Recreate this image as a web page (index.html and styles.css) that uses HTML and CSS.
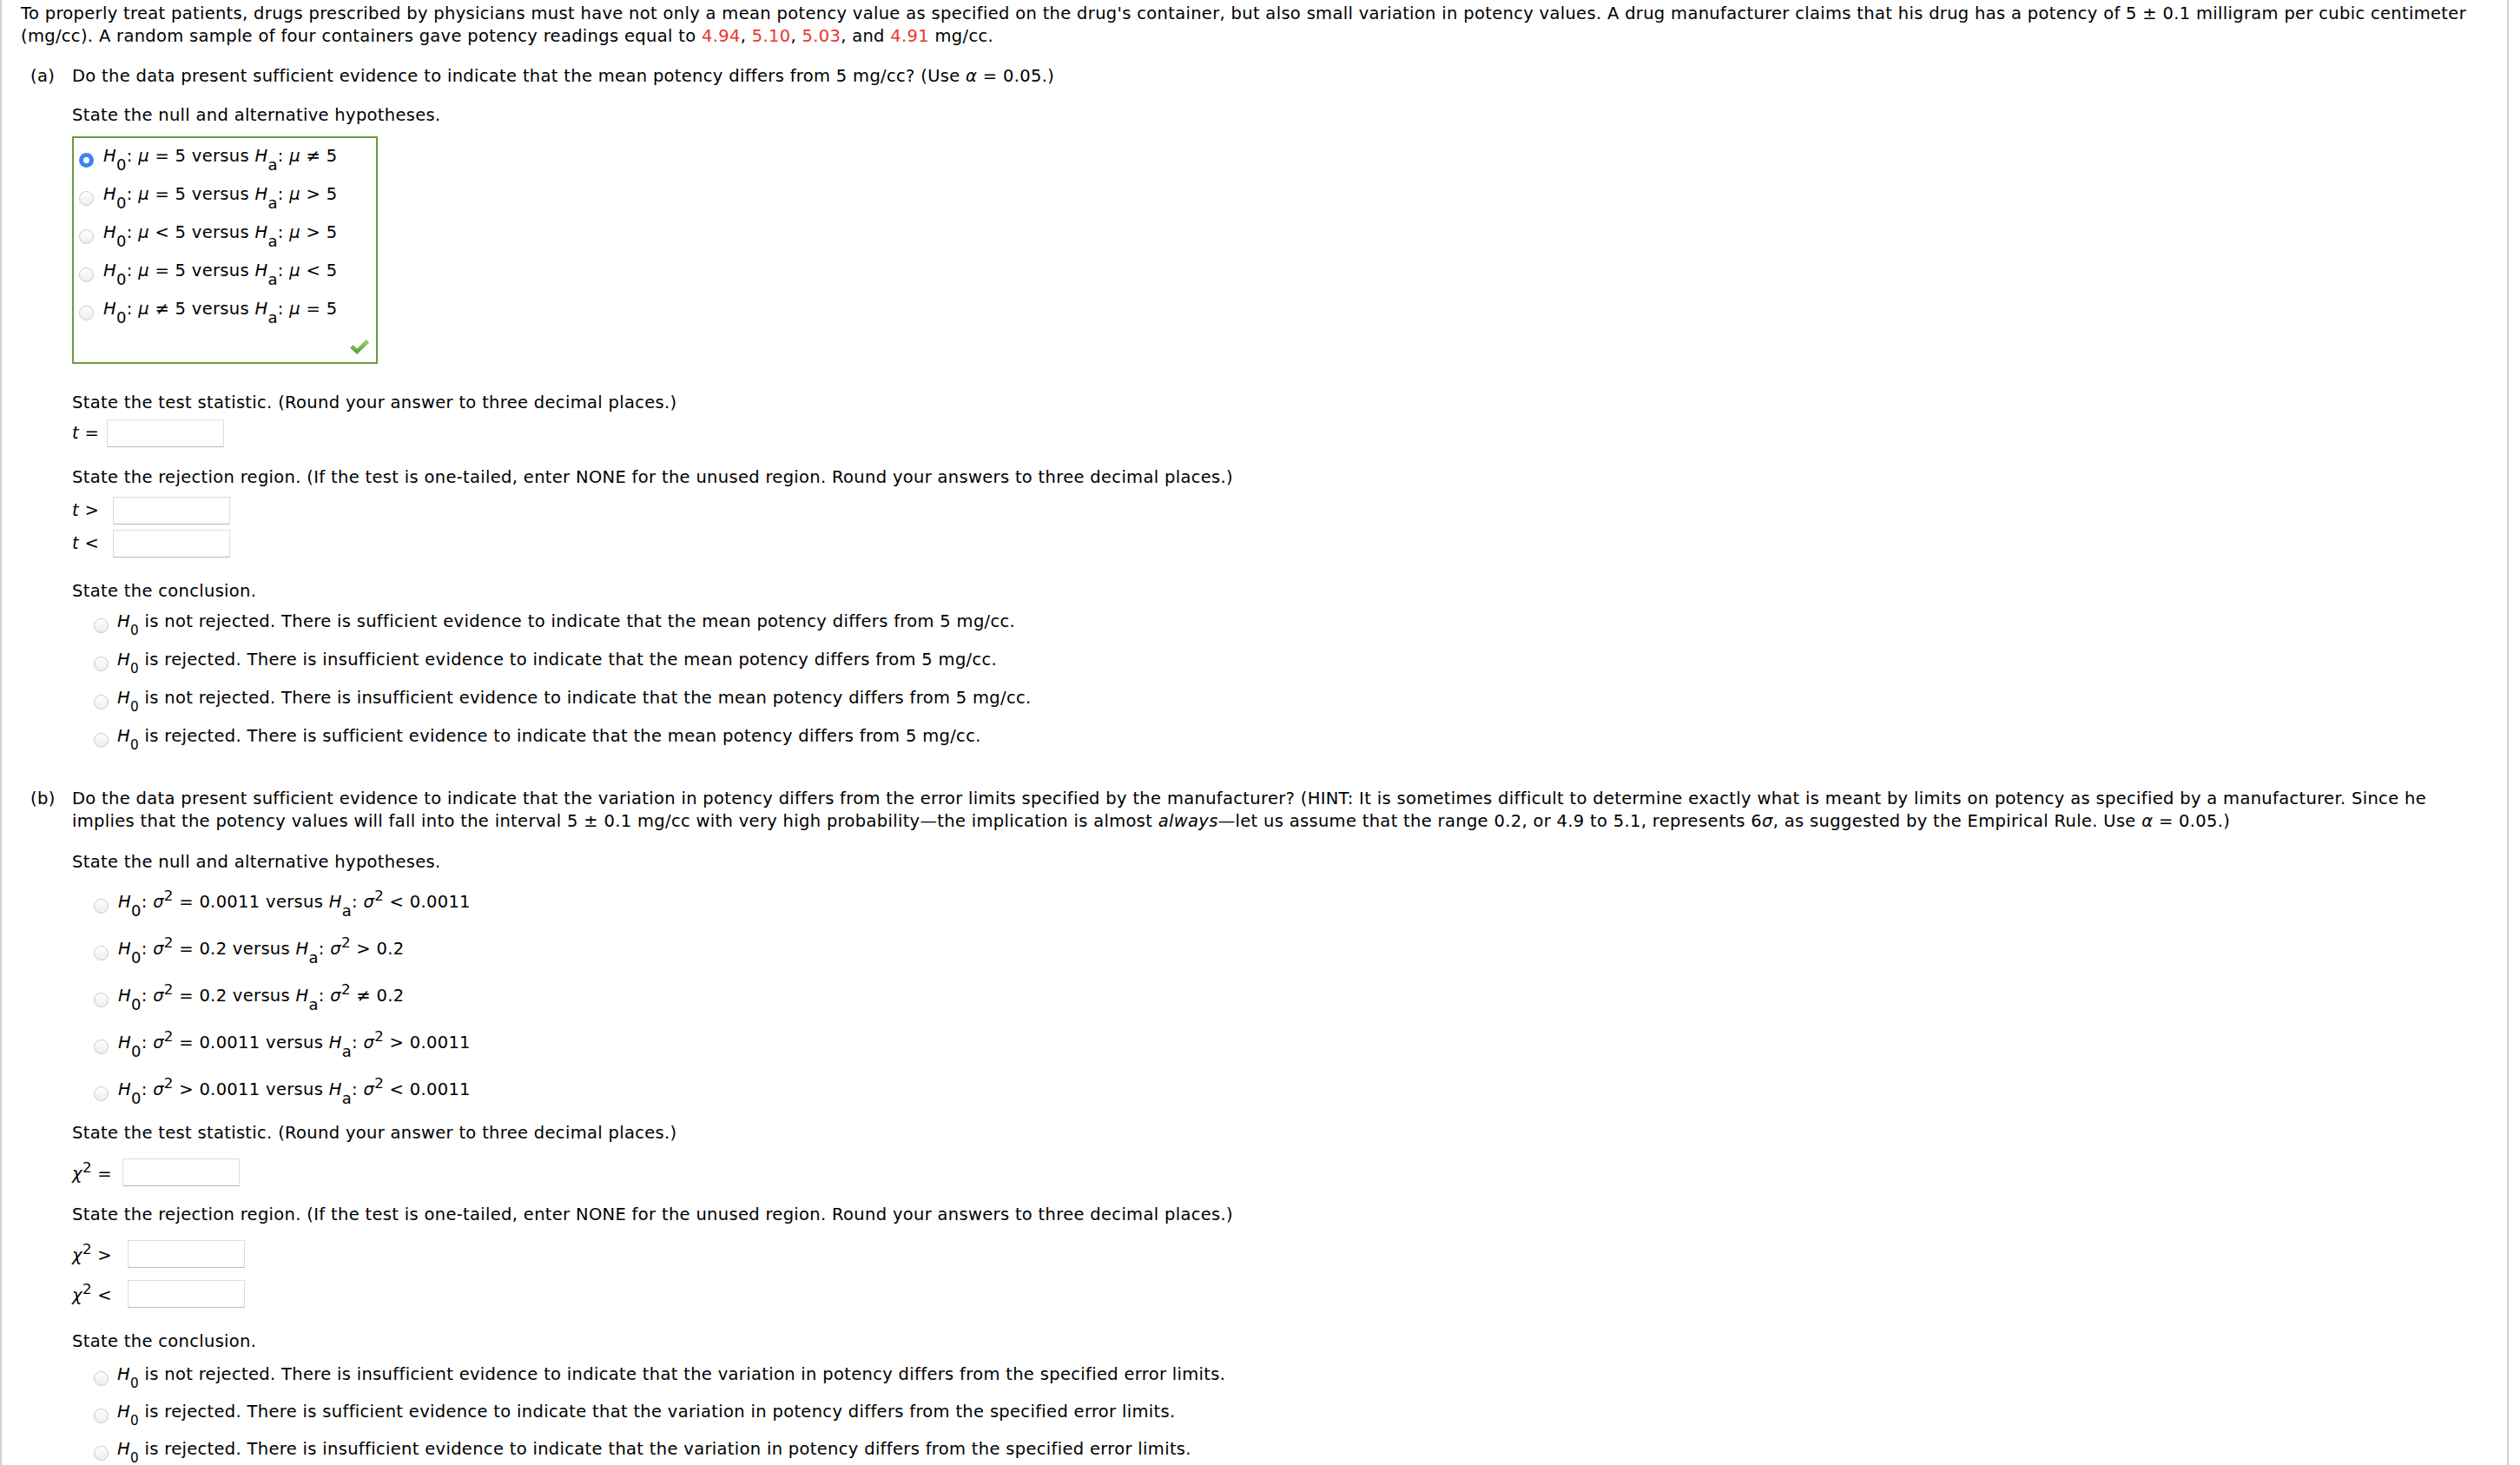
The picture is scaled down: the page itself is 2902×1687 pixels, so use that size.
FILE: index.html
```html
<!DOCTYPE html>
<html lang="en">
<head>
<meta charset="utf-8">
<title>Potency hypothesis test</title>
<link rel="stylesheet" href="styles.css">
</head>
<body>
<div class="page">
  <p class="intro">To properly treat patients, drugs prescribed by physicians must have not only a mean potency value as specified on the drug's container, but also small variation in potency values. A drug manufacturer claims that his drug has a potency of 5 ± 0.1 milligram per cubic centimeter (mg/cc). A random sample of four containers gave potency readings equal to <span class="red">4.94</span>, <span class="red">5.10</span>, <span class="red">5.03</span>, and <span class="red">4.91</span> mg/cc.</p>

  <section class="part part-a">
    <div class="part-label">(a)</div>
    <div class="part-body">
      <p>Do the data present sufficient evidence to indicate that the mean potency differs from 5 mg/cc? (Use <i>α</i> = 0.05.)</p>
      <p class="prompt mt-19">State the null and alternative hypotheses.</p>
      <div class="choice-box">
        <label class="choice"><input class="radio" type="radio" name="a-hyp" checked><span class="choice-text"><i>H</i><sub>0</sub>: <i>μ</i> = 5 versus <i>H</i><sub>a</sub>: <i>μ</i> ≠ 5</span></label>
        <label class="choice"><input class="radio" type="radio" name="a-hyp"><span class="choice-text"><i>H</i><sub>0</sub>: <i>μ</i> = 5 versus <i>H</i><sub>a</sub>: <i>μ</i> &gt; 5</span></label>
        <label class="choice"><input class="radio" type="radio" name="a-hyp"><span class="choice-text"><i>H</i><sub>0</sub>: <i>μ</i> &lt; 5 versus <i>H</i><sub>a</sub>: <i>μ</i> &gt; 5</span></label>
        <label class="choice"><input class="radio" type="radio" name="a-hyp"><span class="choice-text"><i>H</i><sub>0</sub>: <i>μ</i> = 5 versus <i>H</i><sub>a</sub>: <i>μ</i> &lt; 5</span></label>
        <label class="choice"><input class="radio" type="radio" name="a-hyp"><span class="choice-text"><i>H</i><sub>0</sub>: <i>μ</i> ≠ 5 versus <i>H</i><sub>a</sub>: <i>μ</i> = 5</span></label>
        <div class="check-row">
          <svg class="check" width="22" height="17" viewBox="0 0 22 17" aria-hidden="true">
            <defs>
              <linearGradient id="checkGrad" x1="0" y1="0" x2="0" y2="1">
                <stop offset="0" stop-color="#9fd977"/>
                <stop offset="1" stop-color="#4b9a35"/>
              </linearGradient>
            </defs>
            <path d="M0.5 9.6 L3.6 6.6 L8.2 11 L18.6 0.6 L21.6 3.6 L8.2 16.6 Z" fill="url(#checkGrad)" stroke="#5a9e3c" stroke-width="0.6" stroke-linejoin="round"/>
          </svg>
        </div>
      </div>

      <p class="prompt mt-32">State the test statistic. (Round your answer to three decimal places.)</p>
      <div class="answer mt-6"><span class="answer-label"><i>t</i> =</span><input class="answer-input" type="text"></div>

      <p class="prompt mt-22">State the rejection region. (If the test is one-tailed, enter NONE for the unused region. Round your answers to three decimal places.)</p>
      <div class="answer mt-9"><span class="answer-label"><i>t</i> &gt;&nbsp;</span><input class="answer-input" type="text"></div>
      <div class="answer mt-6"><span class="answer-label"><i>t</i> &lt;&nbsp;</span><input class="answer-input" type="text"></div>

      <p class="prompt mt-26">State the conclusion.</p>
      <div class="choice-list mt-9 rows-44">
        <label class="choice"><input class="radio" type="radio" name="a-con"><span class="choice-text"><i>H</i><sub class="small">0</sub> is not rejected. There is sufficient evidence to indicate that the mean potency differs from 5 mg/cc.</span></label>
        <label class="choice"><input class="radio" type="radio" name="a-con"><span class="choice-text"><i>H</i><sub class="small">0</sub> is rejected. There is insufficient evidence to indicate that the mean potency differs from 5 mg/cc.</span></label>
        <label class="choice"><input class="radio" type="radio" name="a-con"><span class="choice-text"><i>H</i><sub class="small">0</sub> is not rejected. There is insufficient evidence to indicate that the mean potency differs from 5 mg/cc.</span></label>
        <label class="choice"><input class="radio" type="radio" name="a-con"><span class="choice-text"><i>H</i><sub class="small">0</sub> is rejected. There is sufficient evidence to indicate that the mean potency differs from 5 mg/cc.</span></label>
      </div>
    </div>
  </section>

  <section class="part part-b">
    <div class="part-label">(b)</div>
    <div class="part-body">
      <p>Do the data present sufficient evidence to indicate that the variation in potency differs from the error limits specified by the manufacturer? (HINT: It is sometimes difficult to determine exactly what is meant by limits on potency as specified by a manufacturer. Since he implies that the potency values will fall into the interval 5 ± 0.1 mg/cc with very high probability—the implication is almost <i>always</i>—let us assume that the range 0.2, or 4.9 to 5.1, represents 6<i>σ</i>, as suggested by the Empirical Rule. Use <i>α</i> = 0.05.)</p>
      <p class="prompt mt-21">State the null and alternative hypotheses.</p>
      <div class="choice-list mt-20 rows-54">
        <label class="choice"><input class="radio" type="radio" name="b-hyp"><span class="choice-text"><i>H</i><sub>0</sub>: <i>σ</i><sup>2</sup> = 0.0011 versus <i>H</i><sub>a</sub>: <i>σ</i><sup>2</sup> &lt; 0.0011</span></label>
        <label class="choice"><input class="radio" type="radio" name="b-hyp"><span class="choice-text"><i>H</i><sub>0</sub>: <i>σ</i><sup>2</sup> = 0.2 versus <i>H</i><sub>a</sub>: <i>σ</i><sup>2</sup> &gt; 0.2</span></label>
        <label class="choice"><input class="radio" type="radio" name="b-hyp"><span class="choice-text"><i>H</i><sub>0</sub>: <i>σ</i><sup>2</sup> = 0.2 versus <i>H</i><sub>a</sub>: <i>σ</i><sup>2</sup> ≠ 0.2</span></label>
        <label class="choice"><input class="radio" type="radio" name="b-hyp"><span class="choice-text"><i>H</i><sub>0</sub>: <i>σ</i><sup>2</sup> = 0.0011 versus <i>H</i><sub>a</sub>: <i>σ</i><sup>2</sup> &gt; 0.0011</span></label>
        <label class="choice"><input class="radio" type="radio" name="b-hyp"><span class="choice-text"><i>H</i><sub>0</sub>: <i>σ</i><sup>2</sup> &gt; 0.0011 versus <i>H</i><sub>a</sub>: <i>σ</i><sup>2</sup> &lt; 0.0011</span></label>
      </div>

      <p class="prompt mt-24">State the test statistic. (Round your answer to three decimal places.)</p>
      <div class="answer mt-16"><span class="answer-label chi"><i>χ</i><sup>2</sup> =</span><input class="answer-input" type="text"></div>

      <p class="prompt mt-20">State the rejection region. (If the test is one-tailed, enter NONE for the unused region. Round your answers to three decimal places.)</p>
      <div class="answer mt-16"><span class="answer-label chi"><i>χ</i><sup>2</sup> &gt;&nbsp;</span><input class="answer-input" type="text"></div>
      <div class="answer mt-14"><span class="answer-label chi"><i>χ</i><sup>2</sup> &lt;&nbsp;</span><input class="answer-input" type="text"></div>

      <p class="prompt mt-26">State the conclusion.</p>
      <div class="choice-list mt-12 rows-43">
        <label class="choice"><input class="radio" type="radio" name="b-con"><span class="choice-text"><i>H</i><sub class="small">0</sub> is not rejected. There is insufficient evidence to indicate that the variation in potency differs from the specified error limits.</span></label>
        <label class="choice"><input class="radio" type="radio" name="b-con"><span class="choice-text"><i>H</i><sub class="small">0</sub> is rejected. There is sufficient evidence to indicate that the variation in potency differs from the specified error limits.</span></label>
        <label class="choice"><input class="radio" type="radio" name="b-con"><span class="choice-text"><i>H</i><sub class="small">0</sub> is rejected. There is insufficient evidence to indicate that the variation in potency differs from the specified error limits.</span></label>
      </div>
    </div>
  </section>
</div>
</body>
</html>
```

FILE: styles.css
```css
html, body {
  margin: 0;
  padding: 0;
  background: #ffffff;
}

body {
  font-family: "DejaVu Sans", Verdana, sans-serif;
  font-size: 19.5px;
  line-height: 26px;
  letter-spacing: 0.32px;
  color: #000000;
}

p {
  margin: 0;
}

i {
  font-style: italic;
}

.page {
  box-sizing: border-box;
  width: 2889px;
  min-height: 100vh;
  border-left: 2px solid #d0d0d0;
  border-right: 2px solid #d0d0d0;
  padding: 3px 26px 0 22px;
}

.red {
  color: #e8362d;
}

.part {
  display: flex;
}

.part-a {
  margin-top: 20px;
}

.part-b {
  margin-top: 46px;
}

.part-label {
  flex: none;
  width: 48px;
  padding-left: 11px;
}

.part-body {
  flex: 1;
  min-width: 0;
}

/* spacing helpers */
.mt-6 { margin-top: 6px; }
.mt-9 { margin-top: 9px; }
.mt-10 { margin-top: 10px; }
.mt-12 { margin-top: 12px; }
.mt-14 { margin-top: 14px; }
.mt-16 { margin-top: 16px; }
.mt-18 { margin-top: 18px; }
.mt-19 { margin-top: 19px; }
.mt-20 { margin-top: 20px; }
.mt-21 { margin-top: 21px; }
.mt-22 { margin-top: 22px; }
.mt-24 { margin-top: 24px; }
.mt-26 { margin-top: 26px; }
.mt-32 { margin-top: 32px; }

/* sub / superscripts */
sub, sup {
  line-height: 0;
  position: static;
}

sub {
  font-size: 0.92em;
  vertical-align: -10px;
}

sub.small {
  font-size: 0.78em;
  vertical-align: -9px;
}

sup {
  font-size: 0.85em;
  vertical-align: 8.5px;
}

/* choices */
.choice {
  display: flex;
  align-items: flex-start;
  height: 26px;
  white-space: nowrap;
}

.choice-text {
  display: block;
}

.radio {
  -webkit-appearance: none;
  appearance: none;
  flex: none;
  box-sizing: border-box;
  width: 17px;
  height: 17px;
  margin: 9px 0 0 0;
  border: 1px solid #cacaca;
  border-radius: 50%;
  background: linear-gradient(#ffffff, #ededed);
}

.radio:checked {
  border: none;
  background: radial-gradient(circle, #ffffff 0, #ffffff 3.2px, #3b82f6 3.9px);
}

.choice-box {
  box-sizing: border-box;
  width: 352px;
  margin-top: 11px;
  border: 2px solid #6c9a40;
  padding: 8px 8px 9px 6px;
}

.choice-box .choice {
  gap: 11px;
}

.choice-box .choice + .choice {
  margin-top: 18px;
}

.check-row {
  display: flex;
  justify-content: flex-end;
  height: 17px;
  margin-top: 22px;
}

.check {
  display: block;
}

.choice-list {
  padding-left: 25px;
}

.choice-list .choice {
  gap: 10px;
}

.rows-44 .choice + .choice { margin-top: 18px; }
.rows-54 .choice + .choice { margin-top: 28px; }
.rows-43 .choice + .choice { margin-top: 17px; }

.rows-54 .choice {
  gap: 11px;
}

/* numeric answers */
.answer {
  display: flex;
  align-items: center;
}

.answer-label {
  margin-right: 9px;
  white-space: nowrap;
}

.answer-label.chi {
  padding-top: 4px;
  margin-right: 12px;
}

.answer-input {
  box-sizing: border-box;
  width: 135px;
  height: 32px;
  margin: 0;
  padding: 0 4px;
  border: 1px solid #dddddd;
  border-bottom-color: #b9b9b9;
  border-radius: 0;
  background: #ffffff;
  font: inherit;
}
```
